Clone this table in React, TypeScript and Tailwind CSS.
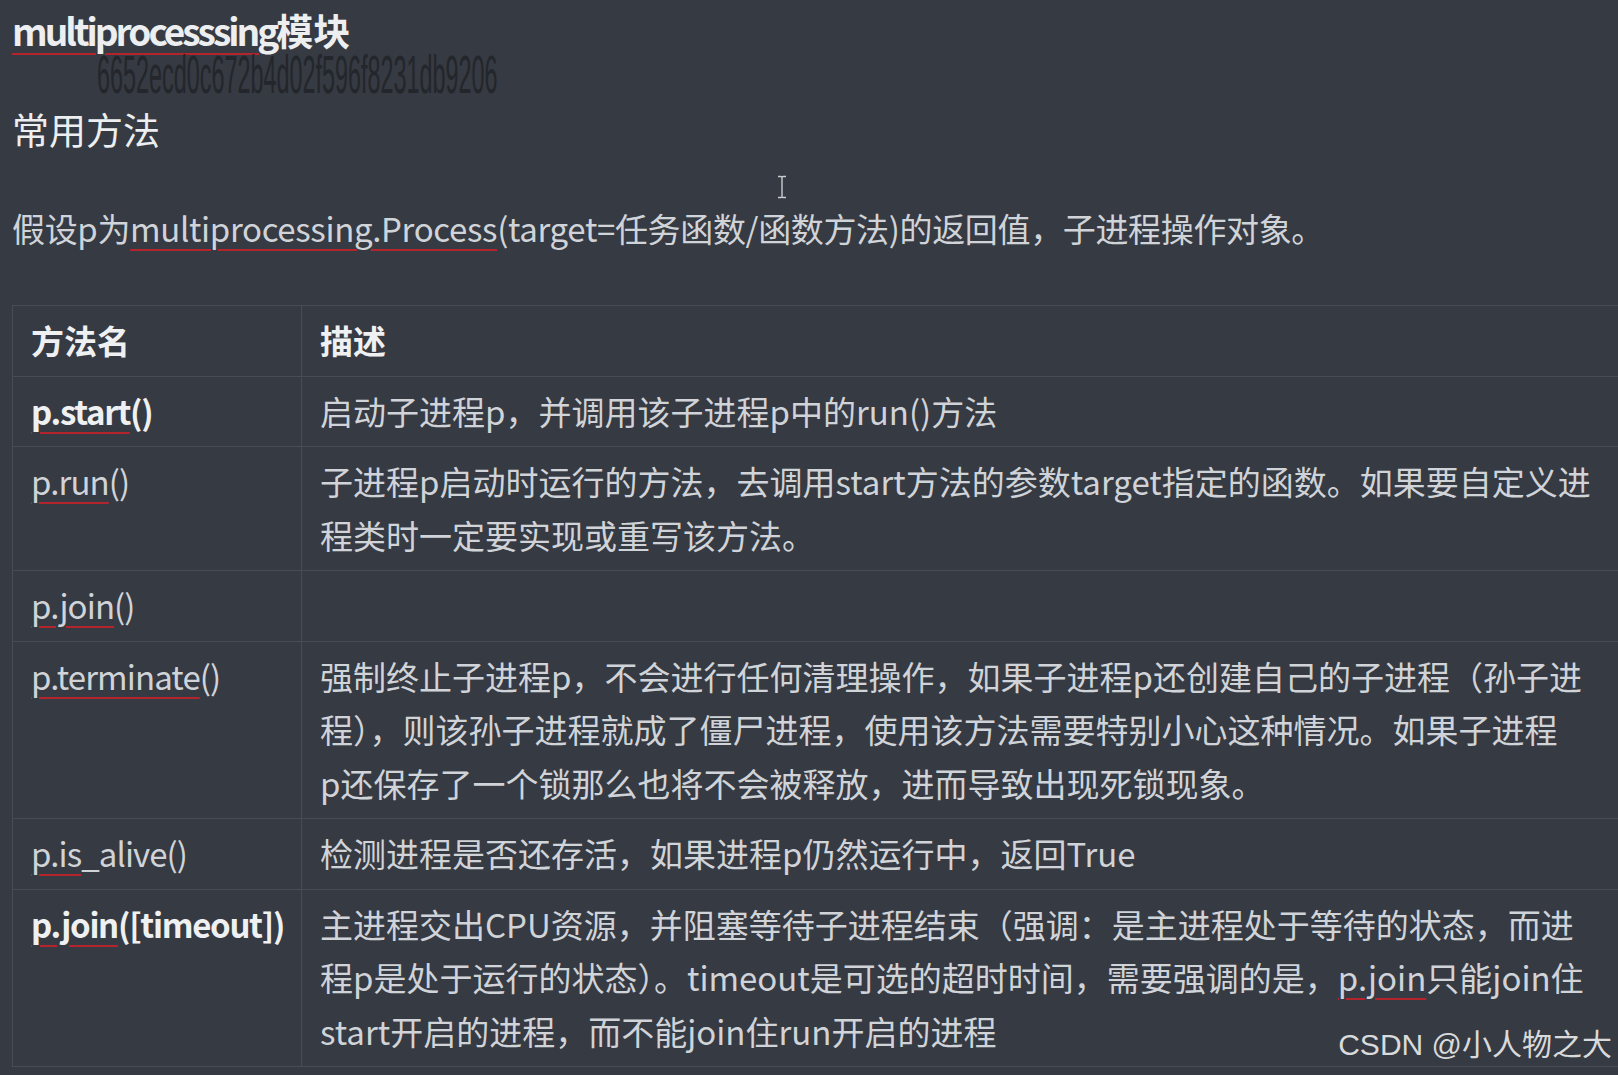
import React from "react";

const U = ({ children }: { children: React.ReactNode }) => (
  <span className="underline decoration-[#b3242c] decoration-2 underline-offset-[7px]">{children}</span>
);

type Row = { name: React.ReactNode; bold?: boolean; lines: React.ReactNode[] };

const rows: Row[] = [
  { name: <><U>p.start</U>()</>, bold: true, lines: ["启动子进程p，并调用该子进程p中的run()方法"] },
  {
    name: <><U>p.run</U>()</>,
    lines: [
      "子进程p启动时运行的方法，去调用start方法的参数target指定的函数。如果要自定义进",
      "程类时一定要实现或重写该方法。",
    ],
  },
  { name: <><U>p.join</U>()</>, lines: [""] },
  {
    name: <><U>p.terminate</U>()</>,
    lines: [
      "强制终止子进程p，不会进行任何清理操作，如果子进程p还创建自己的子进程（孙子进",
      "程），则该孙子进程就成了僵尸进程，使用该方法需要特别小心这种情况。如果子进程",
      "p还保存了一个锁那么也将不会被释放，进而导致出现死锁现象。",
    ],
  },
  { name: <><U>p.is</U>_alive()</>, lines: ["检测进程是否还存活，如果进程p仍然运行中，返回True"] },
  {
    name: <><U>p.join</U>([timeout])</>,
    bold: true,
    lines: [
      "主进程交出CPU资源，并阻塞等待子进程结束（强调：是主进程处于等待的状态，而进",
      <>程p是处于运行的状态）。timeout是可选的超时时间，需要强调的是，<U>p.join</U>只能join住</>,
      "start开启的进程，而不能join住run开启的进程",
    ],
  },
];

export default function App() {
  return (
    <div className="relative w-[1618px] h-[1075px] overflow-hidden bg-[#363a42] font-['Noto_Sans_CJK_SC',sans-serif] text-[#d0d3d8]">
      <div className="pl-[12px]">
        <div className="pt-[8px] h-[53px] text-[37px] leading-[44px] font-bold text-[#eceef0] whitespace-nowrap">
          <span className="tracking-[-3px]"><U>multiprocesssing</U></span>模块
        </div>
        <div className="h-[42px] ml-[85px] leading-[42px] whitespace-nowrap">
          <span className="inline-block origin-left scale-x-[0.433] text-[54px] font-['Liberation_Sans',sans-serif] text-[#23262b]">
            6652ecd0c672b4d02f596f8231db9206
          </span>
        </div>
        <div className="mt-[12px] text-[37px] leading-[44px] text-[#eceef0]">常用方法</div>
        <div className="mt-[52px] text-[33px] leading-[50px] whitespace-nowrap tracking-[-0.35px]">
          假设p为<U>multiprocessing.Process</U>(target=任务函数/函数方法)的返回值，子进程操作对象。
        </div>
        <table className="mt-[52px] w-[1640px] table-fixed border-collapse text-[33px] leading-[53.5px]">
          <colgroup>
            <col className="w-[289px]" />
            <col />
          </colgroup>
          <thead>
            <tr>
              <th className="border border-[#484c55] px-[18px] py-[8px] text-left font-bold text-[#eef0f2]">方法名</th>
              <th className="border border-[#484c55] px-[18px] py-[8px] text-left font-bold text-[#eef0f2]">描述</th>
            </tr>
          </thead>
          <tbody>
            {rows.map((r, i) => (
              <tr key={i}>
                <td className={`align-top border border-[#484c55] pl-[18px] pr-0 py-[8px] whitespace-nowrap ${r.bold ? "font-bold text-[#eef0f2] tracking-[-1.3px]" : "tracking-[-0.9px]"}`}>
                  {r.name}
                </td>
                <td className="align-top border border-[#484c55] px-[18px] py-[8px] whitespace-nowrap">
                  {r.lines.map((l, j) => (
                    <div key={j} className="h-[53.5px]">{l}</div>
                  ))}
                </td>
              </tr>
            ))}
          </tbody>
        </table>
      </div>
      <svg className="absolute left-[776px] top-[175px]" width="12" height="24" viewBox="0 0 12 24" fill="none">
        <path d="M2 1.5h3c.6 0 1 .4 1 1v19c0 .6.4 1 1 1h3M10 1.5H7c-.6 0-1 .4-1 1M6 21.5c0 .6-.4 1-1 1H2" stroke="#c9ccd1" strokeWidth="1.4" />
      </svg>
      <div className="absolute right-[6px] top-[1025px] text-[30px] leading-[40px] text-[#d9dadc] font-['Liberation_Sans','Noto_Sans_CJK_SC',sans-serif] whitespace-nowrap">
        CSDN @小人物之大
      </div>
    </div>
  );
}
